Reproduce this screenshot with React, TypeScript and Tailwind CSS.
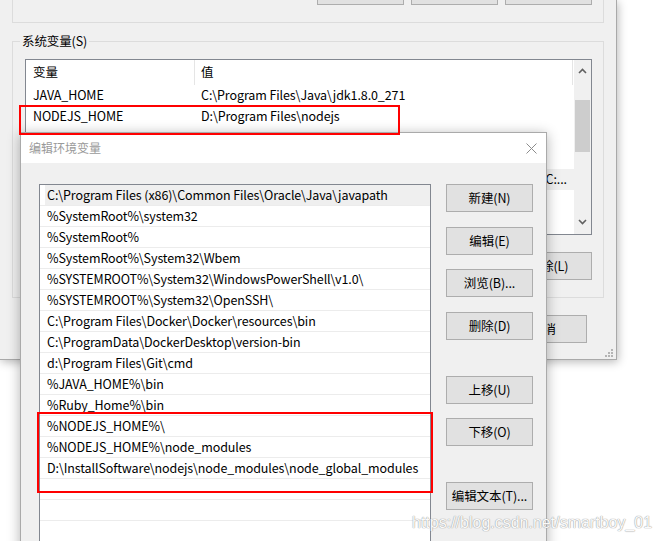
import React from "react"

const sysVars = [
    { name: "JAVA_HOME", value: "C:\\Program Files\\Java\\jdk1.8.0_271" },
    { name: "NODEJS_HOME", value: "D:\\Program Files\\nodejs" },
    { name: "NUMBER_OF_PROCESSORS", value: "8" },
    { name: "OS", value: "Windows_NT" },
    { name: "Path", value: "C:\\Program Files (x86)\\Common Files\\Oracle\\Java\\javapath;%SystemRoot%\\system32;", tail: "C:...", selected: true },
    { name: "PATHEXT", value: ".COM;.EXE;.BAT;.CMD;.VBS;.VBE;.JS;.JSE;.WSF;.WSH;.MSC" },
    { name: "PROCESSOR_ARCHITECTURE", value: "AMD64" },
    { name: "PROCESSOR_IDENTIFIER", value: "Intel64 Family 6 Model 158 Stepping 10, GenuineIntel" },
]

const pathEntries = [
    "C:\\Program Files (x86)\\Common Files\\Oracle\\Java\\javapath",
    "%SystemRoot%\\system32",
    "%SystemRoot%",
    "%SystemRoot%\\System32\\Wbem",
    "%SYSTEMROOT%\\System32\\WindowsPowerShell\\v1.0\\",
    "%SYSTEMROOT%\\System32\\OpenSSH\\",
    "C:\\Program Files\\Docker\\Docker\\resources\\bin",
    "C:\\ProgramData\\DockerDesktop\\version-bin",
    "d:\\Program Files\\Git\\cmd",
    "%JAVA_HOME%\\bin",
    "%Ruby_Home%\\bin",
    "%NODEJS_HOME%\\",
    "%NODEJS_HOME%\\node_modules",
    "D:\\InstallSoftware\\nodejs\\node_modules\\node_global_modules",
    "",
    "",
    "",
    "",
]

const WinButton = ({ label, className = "" }: { label: string; className?: string }) => {
    return (
        <button
            type="button"
            className={`h-[28px] w-[87px] shrink-0 flex items-center justify-center border border-[#adadad] bg-[#e1e1e1] text-[12.5px] tracking-[-0.1px] leading-none text-black ${className}`}
        >
            {label}
        </button>
    )
}

const Chevron = ({ up }: { up?: boolean }) => {
    return (
        <svg width="9" height="6" viewBox="0 0 9 6" fill="none">
            <path d={up ? "M1 5 L4.5 1.5 L8 5" : "M1 1 L4.5 4.5 L8 1"} stroke="#606060" strokeWidth="1.6" />
        </svg>
    )
}

// the 环境变量 window sitting behind, its top part is off screen
const EnvVarsWindow = () => {
    return (
        <div className="absolute left-0 top-0 w-[617px] h-[360px] bg-[#f0f0f0] border-r border-b border-[#a9a9a9] shadow-[1px_2px_9px_rgba(0,0,0,0.28)] flex flex-col">
            {/* 用户变量 group, only its bottom is visible */}
            <div className="mx-[12px] h-[23px] border-x border-b border-[#dcdcdc] flex justify-end items-start gap-[7px] pr-[11px]">
                <WinButton label="新建(N)..." className="-mt-[23px]" />
                <WinButton label="编辑(E)..." className="-mt-[23px]" />
                <WinButton label="删除(D)" className="-mt-[23px]" />
            </div>

            {/* 系统变量 group */}
            <fieldset className="mx-[12px] mt-[10px] border border-[#dcdcdc] p-0 min-w-0">
                <legend className="ml-[7px] px-[2px] leading-[16px]">系统变量(S)</legend>
                <div className="pl-[12px] pr-[11px] pt-[10px] pb-[17px]">
                    <div className="h-[176px] border border-[#828790] bg-white flex">
                        <div className="flex-1 min-w-0 flex flex-col overflow-hidden">
                            <div className="h-[25px] shrink-0 flex">
                                <div className="w-[169px] border-r border-[#e5e5e5] pl-[7px] flex items-center">变量</div>
                                <div className="flex-1 border-r border-[#e5e5e5] pl-[6px] flex items-center">值</div>
                                <div className="w-[1px]" />
                            </div>
                            {sysVars.map((v) => (
                                <div key={v.name} className={`h-[21px] shrink-0 flex items-center ${v.selected ? "bg-[#f0f0f0]" : ""}`}>
                                    <div className="w-[169px] pl-[7px] whitespace-nowrap overflow-hidden">{v.name}</div>
                                    <div className="flex-1 min-w-0 pl-[6px] pr-[7px] flex whitespace-nowrap overflow-hidden">
                                        <span className="flex-1 min-w-0 overflow-hidden">{v.value}</span>
                                        {v.tail && <span className="shrink-0">{v.tail}</span>}
                                    </div>
                                </div>
                            ))}
                        </div>
                        <div className="w-[17px] shrink-0 bg-[#f0f0f0] flex flex-col">
                            <div className="h-[20px] flex items-center justify-center pt-[1px]">
                                <Chevron up />
                            </div>
                            <div className="mt-[20px] mx-[1px] h-[52px] bg-[#cdcdcd]" />
                            <div className="flex-1" />
                            <div className="h-[20px] flex items-center justify-center pb-[4px]">
                                <Chevron />
                            </div>
                        </div>
                    </div>
                    <div className="mt-[17px] flex justify-end gap-[7px]">
                        <WinButton label="新建(W)..." />
                        <WinButton label="编辑(I)..." />
                        <WinButton label="删除(L)" />
                    </div>
                </div>
            </fieldset>

            <div className="mt-[17px] mr-[29px] flex justify-end gap-[7px]">
                <WinButton label="确定" />
                <WinButton label="取消" />
            </div>

            {/* size grip */}
            <svg className="absolute right-[3px] bottom-[2px]" width="9" height="9" viewBox="0 0 9 9" fill="#b4b4b4">
                <rect x="7" y="1" width="2" height="2" />
                <rect x="4" y="4" width="2" height="2" />
                <rect x="7" y="4" width="2" height="2" />
                <rect x="1" y="7" width="2" height="2" />
                <rect x="4" y="7" width="2" height="2" />
                <rect x="7" y="7" width="2" height="2" />
            </svg>
        </div>
    )
}

const EditDialog = () => {
    return (
        <div className="absolute left-[20px] top-[132px] w-[527px] h-[430px] bg-[#f0f0f0] border border-[#aaaaaa] shadow-[0_2px_12px_rgba(0,0,0,0.3)] flex flex-col">
            <div className="h-[30px] shrink-0 bg-white flex items-center justify-between pl-[8px] pr-[9px]">
                <span className="text-[12px] tracking-normal text-[#9a9a9a]">编辑环境变量</span>
                <svg width="11" height="11" viewBox="0 0 11 11">
                    <path d="M0.5 0.5 L10.5 10.5 M10.5 0.5 L0.5 10.5" stroke="#8c8c8c" strokeWidth="1" />
                </svg>
            </div>

            <div className="flex pl-[18px] pt-[21px]">
                <div className="w-[392px] h-[380px] shrink-0 border border-[#828790] bg-white overflow-hidden">
                    {pathEntries.map((p, i) => (
                        <div key={i} className="h-[21px] border-b border-[#ececec] pl-[5px]">
                            <div className={`h-full pl-[2px] flex items-center whitespace-nowrap ${i === 0 ? "bg-[#efefef]" : ""}`}>
                                {p}
                            </div>
                        </div>
                    ))}
                </div>

                <div className="ml-[15px] flex flex-col">
                    <WinButton label="新建(N)" />
                    <WinButton label="编辑(E)" className="mt-[15px]" />
                    <WinButton label="浏览(B)..." className="mt-[14px]" />
                    <WinButton label="删除(D)" className="mt-[15px]" />
                    <WinButton label="上移(U)" className="mt-[36px]" />
                    <WinButton label="下移(O)" className="mt-[14px]" />
                    <WinButton label="编辑文本(T)..." className="mt-[36px]" />
                </div>
            </div>
        </div>
    )
}

const App = () => {
    return (
        <div className="relative w-[656px] h-[541px] overflow-hidden bg-white text-[12.5px] tracking-[-0.1px] text-black font-['Noto_Sans_CJK_SC','Noto_Sans',sans-serif]">
            <EnvVarsWindow />
            <EditDialog />

            {/* red marks drawn over the screenshot */}
            <div className="absolute left-[19px] top-[105px] w-[381px] h-[30px] border-2 border-[#ff0000]" />
            <div className="absolute left-[37px] top-[412px] w-[396px] h-[81px] border-2 border-[#ff0000]" />

            <div className="absolute left-[412px] top-[513px] font-['Liberation_Sans',sans-serif] text-[16px] tracking-normal leading-[20px] text-[#fafafa] [text-shadow:0_0_1px_#9c9c9c,0_0_1px_#9c9c9c]">
                https://blog.csdn.net/smartboy_01
            </div>
        </div>
    )
}

export default App
